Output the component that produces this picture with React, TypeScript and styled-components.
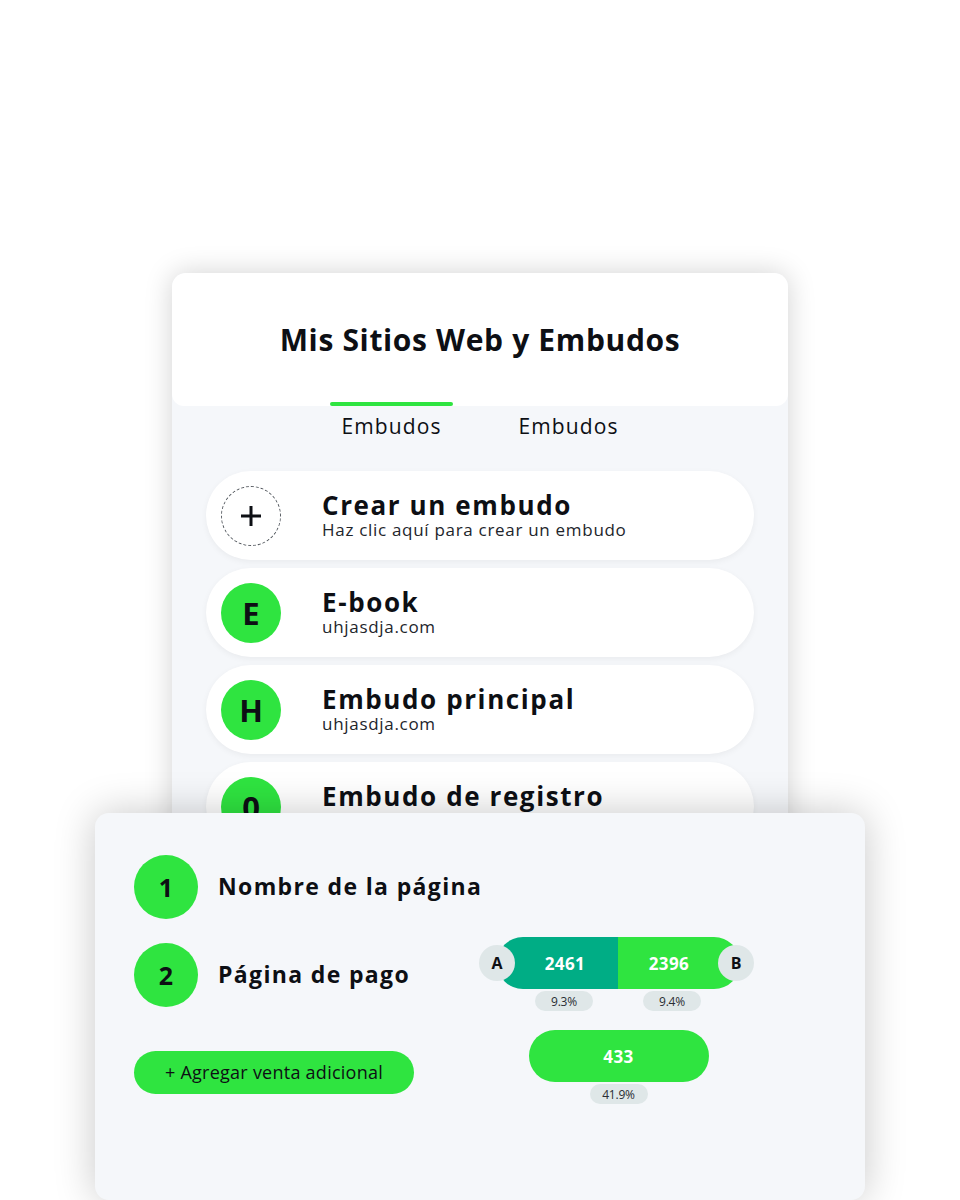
import styled, {createGlobalStyle} from 'styled-components'

const GREEN = '#2fe440'
const TEAL = '#00ad85'
const INK = '#0d0f14'
const PALE = '#f5f7fa'
const CHIP = '#dfe7e8'

const Global = createGlobalStyle`
  html, body {
    margin: 0;
    padding: 0;
    background: #ffffff;
    font-family: 'Open Sans', 'Noto Sans', sans-serif;
    color: ${INK};
  }
`

type Funnel = {
  letter: string
  title: string
  url: string
}

const funnels: Funnel[] = [
  {letter: 'E', title: 'E-book', url: 'uhjasdja.com'},
  {letter: 'H', title: 'Embudo principal', url: 'uhjasdja.com'},
  {letter: '0', title: 'Embudo de registro', url: 'uhjasdja.com'}
]

const steps = ['Nombre de la página', 'Página de pago']

function PlusIcon() {
  return (
    <svg width="24" height="24" viewBox="0 0 24 24">
      <path d="M12 2v20M2 12h20" stroke={INK} strokeWidth="3" fill="none" />
    </svg>
  )
}

export default function App() {
  return (
    <>
      <Global />
      <Page>
        <SitesCard>
          <Header>
            <Title>Mis Sitios Web y Embudos</Title>
          </Header>
          <Tabs>
            <Tab>
              <Indicator active />
              <TabLabel>Embudos</TabLabel>
            </Tab>
            <Tab>
              <Indicator />
              <TabLabel>Embudos</TabLabel>
            </Tab>
          </Tabs>
          <List>
            <Row>
              <DashedCircle>
                <PlusIcon />
              </DashedCircle>
              <RowText>
                <RowTitle>Crear un embudo</RowTitle>
                <RowSub>Haz clic aquí para crear un embudo</RowSub>
              </RowText>
            </Row>
            {funnels.map((f) => (
              <Row key={f.title}>
                <LetterCircle>{f.letter}</LetterCircle>
                <RowText>
                  <RowTitle>{f.title}</RowTitle>
                  <RowSub>{f.url}</RowSub>
                </RowText>
              </Row>
            ))}
          </List>
        </SitesCard>

        <FunnelCard>
          <StepsColumn>
            {steps.map((s, i) => (
              <Step key={s}>
                <StepNumber>{i + 1}</StepNumber>
                <StepName>{s}</StepName>
              </Step>
            ))}
            <AddButton>+ Agregar venta adicional</AddButton>
          </StepsColumn>

          <StatsColumn>
            <SplitBar>
              <Segment tone="teal" side="left">2461</Segment>
              <Segment tone="green" side="right">2396</Segment>
              <VariantBadge side="left">A</VariantBadge>
              <VariantBadge side="right">B</VariantBadge>
            </SplitBar>
            <PctRow>
              <PctCell side="left">
                <Pct>9.3%</Pct>
              </PctCell>
              <PctCell side="right">
                <Pct>9.4%</Pct>
              </PctCell>
            </PctRow>
            <TotalBar>433</TotalBar>
            <Pct>41.9%</Pct>
          </StatsColumn>
        </FunnelCard>
      </Page>
    </>
  )
}

const Page = styled.div`
  display: flex;
  flex-direction: column;
  align-items: center;
  padding-top: 273px;
  height: 927px;
  overflow: hidden;
`

const SitesCard = styled.section`
  width: 616px;
  height: 600px;
  flex-shrink: 0;
  background: ${PALE};
  border-radius: 14px;
  box-shadow: 0 0 28px rgba(0, 0, 0, 0.18);
  overflow: hidden;
`

const Header = styled.div`
  height: 133px;
  background: #ffffff;
  border-radius: 12px;
  display: flex;
  align-items: center;
  justify-content: center;
`

const Title = styled.h1`
  margin: 0;
  font-size: 30px;
  font-weight: 700;
  letter-spacing: 0.65px;
`

const Tabs = styled.div`
  display: flex;
  justify-content: center;
  gap: 54px;
  margin-top: -4px;
`

const Tab = styled.div`
  width: 123px;
  display: flex;
  flex-direction: column;
  align-items: center;
`

const Indicator = styled.div<{active?: boolean}>`
  width: 100%;
  height: 4px;
  border-radius: 2px;
  background: ${({active}) => (active ? GREEN : 'transparent')};
`

const TabLabel = styled.span`
  margin-top: 6px;
  font-size: 21px;
  line-height: 28px;
  letter-spacing: 1.1px;
`

const List = styled.div`
  display: flex;
  flex-direction: column;
  gap: 8px;
  padding: 31px 34px 0;
`

const Row = styled.div`
  height: 89px;
  flex-shrink: 0;
  display: flex;
  align-items: center;
  padding-left: 15px;
  background: #ffffff;
  border-radius: 45px;
  box-shadow: 0 2px 6px rgba(0, 0, 0, 0.05);
`

const circle = `
  width: 60px;
  height: 60px;
  border-radius: 50%;
  flex-shrink: 0;
  display: flex;
  align-items: center;
  justify-content: center;
  box-sizing: border-box;
`

const DashedCircle = styled.div`
  ${circle}
  border: 1px dashed #555a60;
`

const LetterCircle = styled.div`
  ${circle}
  background: ${GREEN};
  font-size: 31px;
  font-weight: 700;
`

const RowText = styled.div`
  display: flex;
  flex-direction: column;
  margin-left: 41px;
`

const RowTitle = styled.span`
  font-size: 26px;
  font-weight: 700;
  line-height: 28px;
  letter-spacing: 1.6px;
`

const RowSub = styled.span`
  margin-top: 1px;
  font-size: 17px;
  line-height: 20px;
  color: #22252b;
  letter-spacing: 0.7px;
`

const FunnelCard = styled.section`
  position: relative;
  z-index: 1;
  margin-top: -60px;
  width: 770px;
  height: 387px;
  flex-shrink: 0;
  box-sizing: border-box;
  padding: 42px 0 0 39px;
  display: flex;
  background: ${PALE};
  border-radius: 14px;
  box-shadow: 0 0 40px rgba(0, 0, 0, 0.22);
`

const StepsColumn = styled.div`
  width: 363px;
  display: flex;
  flex-direction: column;
  align-items: flex-start;
  gap: 24px;
`

const Step = styled.div`
  display: flex;
  align-items: center;
  gap: 20px;
`

const StepNumber = styled.div`
  width: 64px;
  height: 64px;
  border-radius: 50%;
  background: ${GREEN};
  display: flex;
  align-items: center;
  justify-content: center;
  font-size: 25px;
  font-weight: 700;
`

const StepName = styled.span`
  margin-top: -3px;
  font-size: 23px;
  font-weight: 700;
  letter-spacing: 1.35px;
`

const AddButton = styled.button`
  margin-top: 20px;
  width: 280px;
  height: 43px;
  padding: 0 0 2px;
  border: none;
  border-radius: 22px;
  background: ${GREEN};
  font-family: 'Open Sans', 'Noto Sans', sans-serif;
  font-size: 18px;
  letter-spacing: 0.25px;
  color: ${INK};
  cursor: pointer;
`

const StatsColumn = styled.div`
  width: 243px;
  margin-top: 82px;
  display: flex;
  flex-direction: column;
  align-items: center;
`

const SplitBar = styled.div`
  position: relative;
  width: 100%;
  height: 52px;
  display: grid;
  grid-template-columns: 121px 122px;
`

const Segment = styled.div<{tone: 'teal' | 'green'; side: 'left' | 'right'}>`
  display: flex;
  align-items: center;
  justify-content: center;
  color: #ffffff;
  font-size: 17px;
  font-weight: 700;
  letter-spacing: 0.4px;
  background: ${({tone}) => (tone === 'teal' ? TEAL : GREEN)};
  border-radius: ${({side}) => (side === 'left' ? '26px 0 0 26px' : '0 26px 26px 0')};
  padding: ${({side}) => (side === 'left' ? '0 0 0 15px' : '0 20px 0 0')};
`

const VariantBadge = styled.div<{side: 'left' | 'right'}>`
  position: absolute;
  top: 8px;
  ${({side}) => (side === 'left' ? 'left: -18px;' : 'right: -14px;')}
  width: 36px;
  height: 36px;
  border-radius: 50%;
  background: ${CHIP};
  display: flex;
  align-items: center;
  justify-content: center;
  font-size: 16px;
  font-weight: 700;
`

const PctRow = styled.div`
  width: 100%;
  display: grid;
  grid-template-columns: 121px 122px;
  margin-top: 2px;
`

const PctCell = styled.div<{side: 'left' | 'right'}>`
  display: flex;
  justify-content: center;
  padding: ${({side}) => (side === 'left' ? '0 0 0 13px' : '0 14px 0 0')};
`

const Pct = styled.span`
  width: 58px;
  height: 20px;
  border-radius: 10px;
  background: ${CHIP};
  display: flex;
  align-items: center;
  justify-content: center;
  font-size: 12px;
  color: #2a2d33;
  letter-spacing: -0.2px;
`

const TotalBar = styled.div`
  margin-top: 19px;
  margin-bottom: 2px;
  width: 180px;
  height: 52px;
  border-radius: 26px;
  background: ${GREEN};
  display: flex;
  align-items: center;
  justify-content: center;
  color: #ffffff;
  font-size: 17px;
  font-weight: 700;
  letter-spacing: 0.4px;
`
